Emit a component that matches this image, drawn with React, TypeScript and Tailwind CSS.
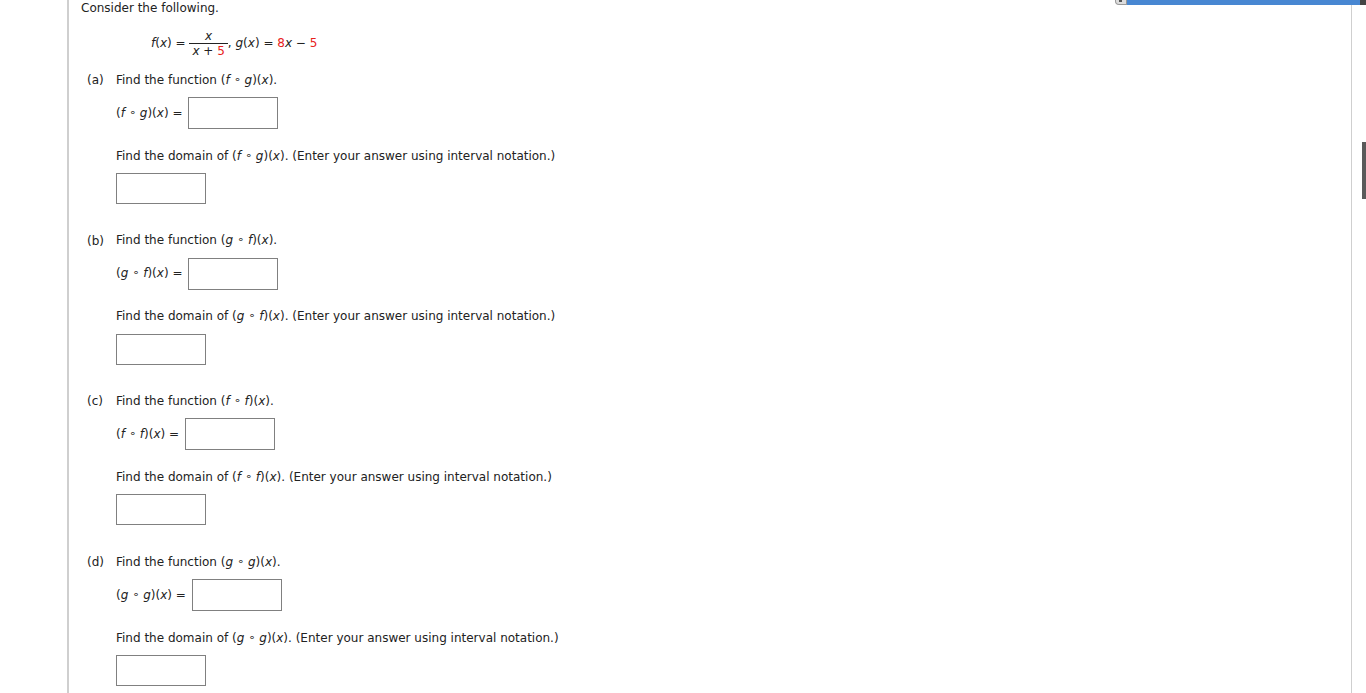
import React from "react";

type Part = {
  letter: string;
  a: string;
  b: string;
};

const PARTS: Part[] = [
  { letter: "a", a: "f", b: "g" },
  { letter: "b", a: "g", b: "f" },
  { letter: "c", a: "f", b: "f" },
  { letter: "d", a: "g", b: "g" },
];

function Comp({ a, b }: { a: string; b: string }) {
  return (
    <span>
      (<i>{a}</i>
      <span className="text-[11px] relative -top-[1px] mx-[4px]">∘</span>
      <i>{b}</i>)(<i>x</i>)
    </span>
  );
}

function Section({ part }: { part: Part }) {
  return (
    <div className="h-[160.7px]">
      <div className="flex h-[14px] items-center">
        <span className="w-[29px]">({part.letter})</span>
        <span>
          Find the function <Comp a={part.a} b={part.b} />.
        </span>
      </div>
      <div className="ml-[29px] mt-[10px] flex items-center gap-[6px]">
        <span>
          <Comp a={part.a} b={part.b} /> =
        </span>
        <div className="w-[90px] h-[32px] border border-[#808080] bg-white" />
      </div>
      <div className="ml-[29px] mt-[20px] h-[14px] flex items-center">
        <span>
          Find the domain of <Comp a={part.a} b={part.b} />. (Enter your answer using interval notation.)
        </span>
      </div>
      <div className="ml-[29px] mt-[10px]">
        <div className="w-[90px] h-[31px] border border-[#808080] bg-white" />
      </div>
    </div>
  );
}

export default function App() {
  return (
    <div
      className="relative w-full h-[693px] overflow-hidden bg-white text-[#222] text-[12px]"
      style={{ fontFamily: '"DejaVu Sans", Verdana, sans-serif' }}
    >
      {/* top right progress bar */}
      <div className="absolute top-0 left-[1115px] w-[12px] h-[5px] bg-[#ddd] rounded-bl-[4px] border border-t-0 border-[#999]">
        <div className="absolute left-[3px] top-0 w-[3px] h-[2px] bg-[#555]" />
      </div>
      <div className="absolute top-0 left-[1127px] w-[233px] h-[5px] bg-[#4887d2]" />
      <div className="absolute top-0 left-[1360px] w-[6px] h-[5px] bg-[#444]" />
      {/* scrollbar thumb */}
      <div className="absolute top-[142px] left-[1362px] w-[4px] h-[57px] bg-[#5a5a5a]" />

      <div className="ml-[67px] w-[1285px] h-full border-l-2 border-r border-[#cfcfcf] pl-[12px]">
        <div className="h-[16px] flex items-center">Consider the following.</div>

        <div className="ml-[70px] mt-[12px] flex items-center h-[30px]">
          <span>
            <i>f</i>(<i>x</i>) =&nbsp;
          </span>
          <span className="inline-flex flex-col items-center leading-[14px]">
            <span className="px-[3px]">
              <i>x</i>
            </span>
            <span className="border-t border-[#222] px-[3px]">
              <i>x</i> + <span className="text-[#e8211b]">5</span>
            </span>
          </span>
          <span>
            , <i>g</i>(<i>x</i>) = <span className="text-[#e8211b]">8</span>
            <i>x</i> − <span className="text-[#e8211b]">5</span>
          </span>
        </div>

        <div className="ml-[6px] mt-[15px]">
          {PARTS.map((p) => (
            <Section key={p.letter} part={p} />
          ))}
        </div>
      </div>
    </div>
  );
}
